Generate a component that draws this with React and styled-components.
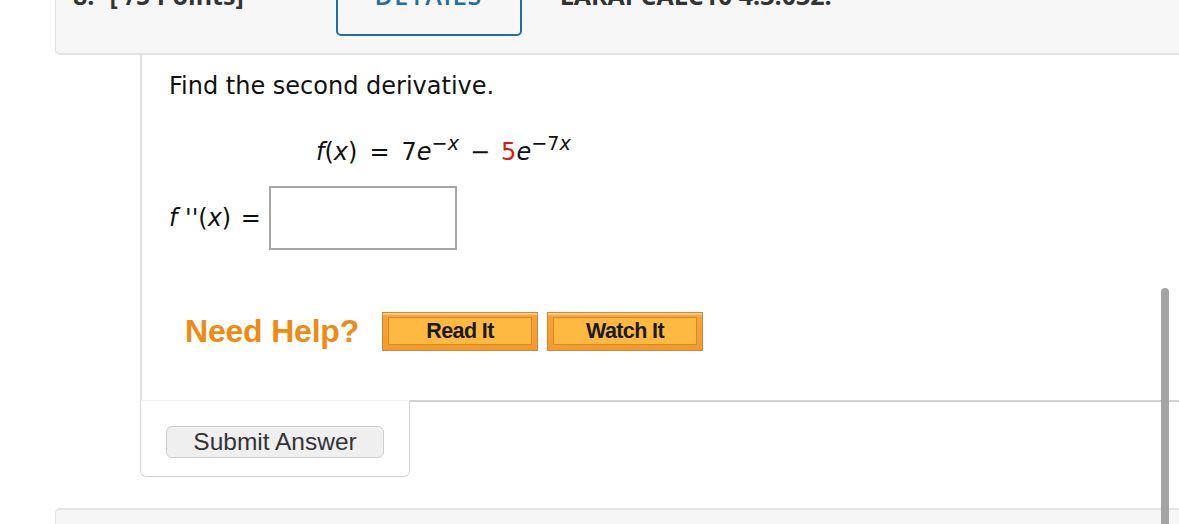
import React from 'react';
import styled, { createGlobalStyle } from 'styled-components';

const GlobalStyle = createGlobalStyle`
  html, body {
    margin: 0;
    padding: 0;
    background: #fff;
    overflow: hidden;
  }
  body {
    width: 1179px;
    height: 524px;
  }
`;

const Page = styled.div`
  display: flex;
  flex-direction: column;
  width: 1179px;
  height: 524px;
  overflow: hidden;
`;

const Header = styled.div`
  display: flex;
  flex-direction: column;
  flex-shrink: 0;
  margin-left: 55px;
  height: 55px;
  box-sizing: border-box;
  background: #f7f7f7;
  border-left: 1px solid #e0e0e0;
  border-bottom: 2px solid #e2e2e2;
  border-bottom-left-radius: 5px;
  overflow: hidden;
`;

const HeaderRow = styled.div`
  display: flex;
  align-items: flex-start;
  margin-top: -25px;
  padding-left: 17px;
  font-family: "Open Sans", "Liberation Sans", sans-serif;
  font-weight: 700;
  font-size: 25px;
  line-height: 40px;
  color: #333;
  white-space: nowrap;
`;

const QNumber = styled.span`
  margin-right: 15px;
`;

const Points = styled.span`
  margin-right: 92px;
`;

const DetailsButton = styled.div`
  width: 186px;
  height: 61px;
  box-sizing: border-box;
  border: 2px solid #1f6ea6;
  border-radius: 5px;
  color: #1f6ea6;
  font-weight: 600;
  font-size: 25px;
  letter-spacing: 1.5px;
  line-height: 36px;
  text-align: center;
  margin-right: 38px;
`;

const Code = styled.span``;

const Question = styled.div`
  margin-left: 140px;
  display: flex;
  flex-direction: column;
  flex-shrink: 0;
`;

const Body = styled.div`
  border-left: 2px solid #e0e0e0;
  padding: 17px 0 49px 27px;
  display: flex;
  flex-direction: column;
  font-family: "DejaVu Sans", Verdana, sans-serif;
  font-size: 24px;
  color: #111;
`;

const Prompt = styled.div`
  line-height: 28px;
`;

const Formula = styled.div`
  margin-top: 38px;
  padding-left: 147px;
  line-height: 28px;
  white-space: nowrap;
`;

const I = styled.i`
  font-style: italic;
`;

const Sup = styled.span`
  position: relative;
  top: -0.5em;
  font-size: 0.8em;
`;

const Red = styled.span`
  color: #e8130f;
`;

const Op = styled.span`
  padding: 0 ${(p) => p.$space || 10}px;
`;

const AnswerRow = styled.div`
  margin-top: 18px;
  display: flex;
  align-items: center;
  gap: 6px;
`;

const AnswerLabel = styled.div`
  line-height: 28px;
  white-space: nowrap;
`;

const AnswerBox = styled.div`
  width: 188px;
  height: 64px;
  box-sizing: border-box;
  border: 2px solid #a6a6a6;
  background: #fff;
`;

const HelpRow = styled.div`
  margin-top: 62px;
  display: flex;
  align-items: center;
  padding-left: 16px;
`;

const NeedHelp = styled.div`
  font-family: "Liberation Sans", Arial, sans-serif;
  font-weight: 700;
  font-size: 32px;
  color: #f08a12;
  margin-right: 23px;
  letter-spacing: -0.2px;
`;

const HelpButton = styled.div`
  width: 156px;
  height: 39px;
  box-sizing: border-box;
  margin-right: 9px;
  padding: 4px 5px 5px 5px;
  border: 1px solid #c58a45;
  background: linear-gradient(#ffd9a0 0, #f7a335 3px, #f59a2a 100%);
  display: flex;
`;

const HelpInner = styled.div`
  flex: 1;
  border: 1px solid #d98a26;
  background: #fdb941;
  display: flex;
  align-items: center;
  justify-content: center;
  font-family: "Liberation Sans", Arial, sans-serif;
  font-weight: 700;
  font-size: 21.5px;
  letter-spacing: -0.6px;
  color: #1a1a1a;
`;

const Footer = styled.div`
  display: flex;
`;

const SubmitBox = styled.div`
  width: 270px;
  height: 77px;
  box-sizing: border-box;
  border: 1px solid #d6d6d6;
  border-top: 1px solid #f2f2f2;
  border-radius: 0 0 6px 6px;
  padding: 25px 0 0 25px;
`;

const SubmitButton = styled.div`
  width: 218px;
  height: 32px;
  box-sizing: border-box;
  border: 1px solid #cfcfcf;
  border-radius: 6px;
  background: #efefef;
  display: flex;
  align-items: center;
  justify-content: center;
  font-family: "Liberation Sans", Arial, sans-serif;
  font-size: 24.5px;
  color: #333;
`;

const FooterRule = styled.div`
  flex: 1;
  border-top: 2px solid #d2d2d2;
`;

const NextPanel = styled.div`
  flex-shrink: 0;
  margin: 31px 0 0 55px;
  height: 60px;
  background: #f6f6f6;
  border-top: 2px solid #e4e4e4;
  border-left: 1px solid #e4e4e4;
  border-top-left-radius: 5px;
`;

const ScrollThumb = styled.div`
  position: fixed;
  right: 10px;
  top: 288px;
  bottom: 0;
  width: 8px;
  border-radius: 4px 4px 0 0;
  background: #a4a4a4;
`;

const App = () => {
  return (
    <Page>
      <GlobalStyle />
      <Header>
        <HeaderRow>
          <QNumber>8.</QNumber>
          <Points>[-/5 Points]</Points>
          <DetailsButton>DETAILS</DetailsButton>
          <Code>LARAPCALC10 4.3.032.</Code>
        </HeaderRow>
      </Header>
      <Question>
        <Body>
          <Prompt>Find the second derivative.</Prompt>
          <Formula>
            <I>f</I>(<I>x</I>)<Op $space={12}>=</Op>7<I>e</I>
            <Sup>−<I>x</I></Sup>
            <Op $space={11}>−</Op>
            <Red>5</Red>
            <I>e</I>
            <Sup>−7<I>x</I></Sup>
          </Formula>
          <AnswerRow>
            <AnswerLabel>
              <I>f</I> ''(<I>x</I>) <Op $space={2}>=</Op>
            </AnswerLabel>
            <AnswerBox />
          </AnswerRow>
          <HelpRow>
            <NeedHelp>Need Help?</NeedHelp>
            <HelpButton>
              <HelpInner>Read It</HelpInner>
            </HelpButton>
            <HelpButton>
              <HelpInner>Watch It</HelpInner>
            </HelpButton>
          </HelpRow>
        </Body>
        <Footer>
          <SubmitBox>
            <SubmitButton>Submit Answer</SubmitButton>
          </SubmitBox>
          <FooterRule />
        </Footer>
      </Question>
      <NextPanel />
      <ScrollThumb />
    </Page>
  );
};

export default App;
